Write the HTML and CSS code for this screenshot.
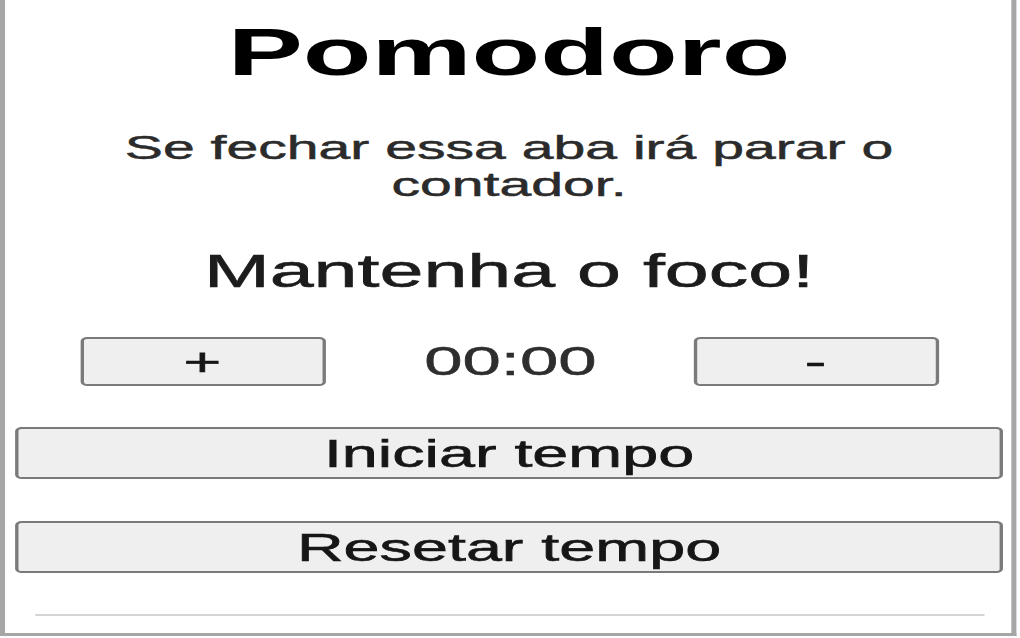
FILE: index.html
```html
<!DOCTYPE html>
<html lang="pt-BR">
<head>
<meta charset="utf-8">
<title>Pomodoro</title>
<link rel="stylesheet" href="styles.css">
</head>
<body>
<div class="stage">
  <div class="popup">
    <h1 class="title">Pomodoro</h1>
    <p class="warning">Se fechar essa aba irá parar o contador.</p>
    <h2 class="focus">Mantenha o foco!</h2>
    <div class="timer-row">
      <button class="btn btn-small">+</button>
      <span class="time">00:00</span>
      <button class="btn btn-small">-</button>
    </div>
    <button class="btn btn-wide btn-start">Iniciar tempo</button>
    <button class="btn btn-wide btn-reset">Resetar tempo</button>
    <hr class="divider">
  </div>
</div>
</body>
</html>
```

FILE: styles.css
```css
html, body {
  margin: 0;
  padding: 0;
  background: #ffffff;
  overflow: hidden;
}

body {
  width: 1020px;
  height: 638px;
  font-family: "Liberation Sans", Arial, sans-serif;
}

/* the reference popup is stretched horizontally */
.stage {
  width: 607px;
  height: 638px;
  transform: scaleX(1.68);
  transform-origin: 0 0;
}

.popup {
  box-sizing: border-box;
  width: 605px;
  height: 636px;
  padding: 18px 5px 0 6px;
  border-left: 3px solid #a6a6a6;
  border-right: 3px solid #a6a6a6;
  border-bottom: 3px solid #a6a6a6;
  display: flex;
  flex-direction: column;
  text-align: center;
}

.title {
  margin: 0;
  font-size: 67px;
  line-height: 67px;
  font-weight: 700;
  color: #000000;
}

.warning {
  margin: 43.7px 0 0;
  font-size: 34px;
  line-height: 37px;
  color: #2b2b2b;
  -webkit-text-stroke: 0.5px #2b2b2b;
}

.focus {
  margin: 44.5px 0 0;
  font-size: 47px;
  line-height: 47px;
  font-weight: 400;
  color: #1c1c1c;
  -webkit-text-stroke: 0.6px #1c1c1c;
}

.timer-row {
  margin-top: 42.8px;
  height: 49px;
  display: flex;
  justify-content: center;
  align-items: center;
  gap: 59px;
}

.time {
  width: 101px;
  font-size: 41px;
  line-height: 49px;
  color: #2e2e2e;
  -webkit-text-stroke: 0.5px #2e2e2e;
}

.btn {
  box-sizing: border-box;
  margin: 0;
  padding: 0;
  font-family: "Liberation Sans", Arial, sans-serif;
  font-size: 38.5px;
  color: #161616;
  -webkit-text-stroke: 0.6px #161616;
  background: #efefef;
  border: 2px solid #7a7a7a;
  border-radius: 4px;
}

.btn-small {
  width: 146px;
  height: 49px;
  line-height: 43px;
}

.btn-wide {
  width: 100%;
  height: 52px;
  padding-top: 2px;
  line-height: 46px;
}

.btn-start {
  margin-top: 41px;
}

.btn-reset {
  margin-top: 42px;
}

.divider {
  margin: 41px 11px 0 12px;
  border: 0;
  border-top: 2px solid #d4d4d4;
  height: 0;
}
```
